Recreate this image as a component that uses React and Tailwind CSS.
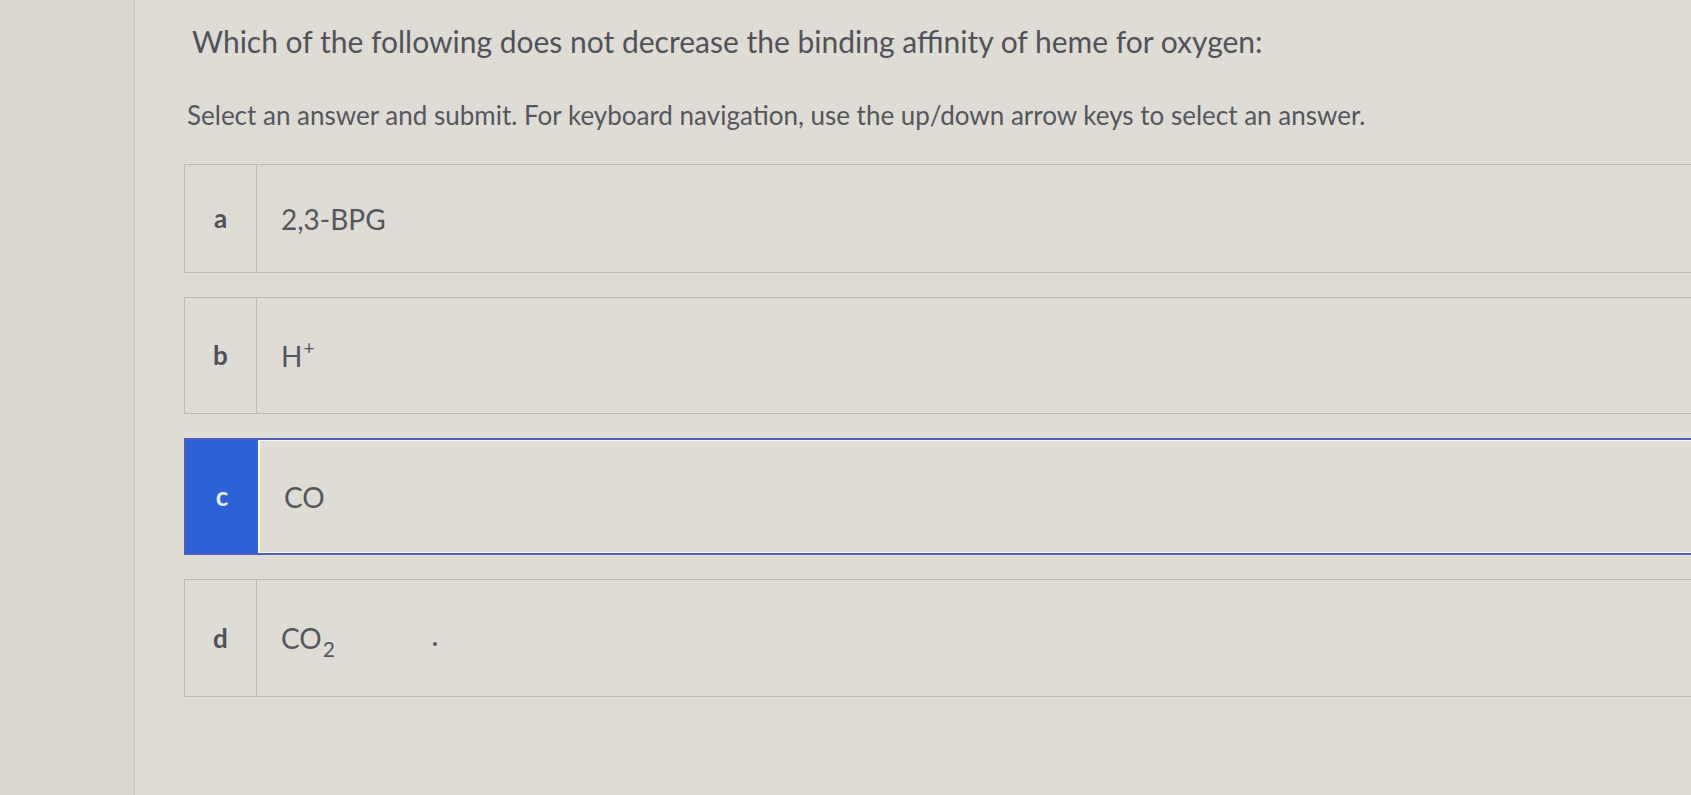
import React from "react";

const options = [
    { key: "a", height: "h-[109px]", content: <span>2,3-BPG</span> },
    {
        key: "b",
        height: "h-[117px]",
        content: (
            <span>
                H<sup className="text-[19px] relative -top-[12px] ml-[1px]">+</sup>
            </span>
        ),
    },
    { key: "c", height: "h-[117px]", content: <span>CO</span>, selected: true },
    {
        key: "d",
        height: "h-[118px]",
        content: (
            <>
                <span>
                    CO<sub className="text-[21px] relative top-[8px] ml-[1px]">2</sub>
                </span>
                <span className="ml-[98px] mt-[12px] w-[4px] h-[4px] rounded-full bg-[#55565c]" />
            </>
        ),
    },
];

const OptionRow = ({ option }) => {
    if (option.selected) {
        return (
            <div className={`flex ${option.height} border-2 border-r-0 border-[#4d5fc0]`}>
                <div className="w-[72px] shrink-0 bg-[#2f61d6] flex items-center justify-center text-[26px] font-bold text-[#e6edfb]">
                    {option.key}
                </div>
                <div className="flex-1 flex items-center pl-[24px] border-l-2 border-y border-white/80 text-[28px] text-[#55565c]">
                    {option.content}
                </div>
            </div>
        );
    }

    return (
        <div className={`flex ${option.height} border border-r-0 border-[#bdbab3]`}>
            <div className="w-[72px] shrink-0 flex items-center justify-center text-[26px] font-bold text-[#505058] border-r border-[#bdbab3]">
                {option.key}
            </div>
            <div className="flex-1 flex items-center pl-[24px] text-[28px] text-[#55565c]">
                {option.content}
            </div>
        </div>
    );
};

export default function App() {
    return (
        <div className="flex h-[795px] w-full overflow-hidden bg-[#dfdcd5] font-['Lato','Liberation_Sans',sans-serif]">
            {/* left strip */}
            <div className="w-[135px] shrink-0 bg-[#dbd7cf] border-r border-[#cdc9c1]" />

            <div className="flex-1 pt-[21px] pl-[49px]">
                <h1 className="pl-[8px] text-[30px] leading-[40px] text-[#515259]">
                    Which of the following does not decrease the binding affinity of heme for oxygen:
                </h1>
                <p className="mt-[39px] pl-[3px] text-[26px] leading-[30px] text-[#55565c]">
                    Select an answer and submit. For keyboard navigation, use the up/down arrow keys to select an answer.
                </p>

                <div className="mt-[34px] flex flex-col gap-[24px]">
                    {options.map((option) => (
                        <OptionRow key={option.key} option={option} />
                    ))}
                </div>
            </div>
        </div>
    );
}
